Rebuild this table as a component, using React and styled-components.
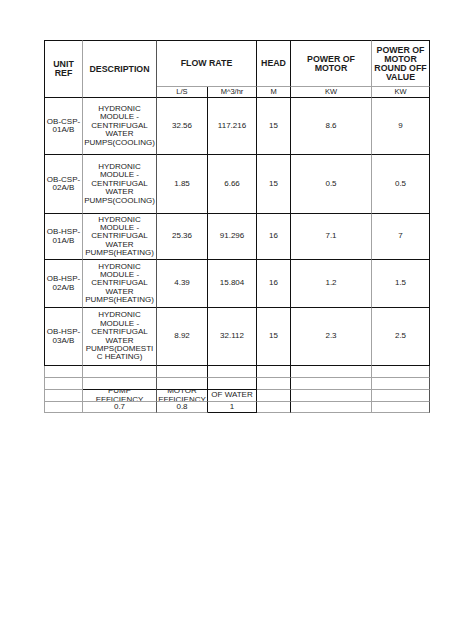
import React from 'react'
import styled, { createGlobalStyle } from 'styled-components'

const GlobalStyle = createGlobalStyle`
	body {
		margin: 0;
		background: #fff;
		font-family: "Liberation Sans", Arial, sans-serif;
	}
`

const LINE = { d: '#111', m: '#555', g: '#a3a3a3' }

const Sheet = styled.div`
	display: grid;
	grid-template-columns: 39px 74px 51px 49px 34px 81px 58px;
	grid-template-rows: 47px 11px 57px 59px 46px 48px 58px 12px 12px 12px 11px;
	width: 386px;
	margin: 40px 0 0 44px;
`

const Cell = styled.div`
	box-sizing: border-box;
	display: flex;
	align-items: center;
	justify-content: center;
	overflow: hidden;
	text-align: center;
	color: #1c1c1c;
	font-size: ${p => p.$size || (p.$bold ? 8.8 : 8)}px;
	line-height: ${p => (p.$bold ? '9px' : '8.35px')};
	font-weight: ${p => (p.$bold ? 700 : 400)};
	grid-column: span ${p => p.$cs || 1};
	grid-row: span ${p => p.$rs || 1};
	border-right: 1px solid ${p => LINE[p.$r || 'g']};
	border-bottom: 1px solid ${p => LINE[p.$b || 'g']};
	border-left: ${p => (p.$l ? `1px solid ${LINE[p.$l]}` : 'none')};
	border-top: ${p => (p.$t ? `1px solid ${LINE[p.$t]}` : 'none')};
`

const Lines = ({ lines }) => (
	<span>
		{[].concat(lines).map((l, i) => (
			<React.Fragment key={i}>
				{i > 0 && <br />}
				{l}
			</React.Fragment>
		))}
	</span>
)

const rows = [
	[['OB-CSP-', '01A/B'], ['HYDRONIC', 'MODULE -', 'CENTRIFUGAL', 'WATER', 'PUMPS(COOLING)'], '32.56', '117.216', '15', '8.6', '9'],
	[['OB-CSP-', '02A/B'], ['HYDRONIC', 'MODULE -', 'CENTRIFUGAL', 'WATER', 'PUMPS(COOLING)'], '1.85', '6.66', '15', '0.5', '0.5'],
	[['OB-HSP-', '01A/B'], ['HYDRONIC', 'MODULE -', 'CENTRIFUGAL', 'WATER', 'PUMPS(HEATING)'], '25.36', '91.296', '16', '7.1', '7'],
	[['OB-HSP-', '02A/B'], ['HYDRONIC', 'MODULE -', 'CENTRIFUGAL', 'WATER', 'PUMPS(HEATING)'], '4.39', '15.804', '16', '1.2', '1.5'],
	[['OB-HSP-', '03A/B'], ['HYDRONIC', 'MODULE -', 'CENTRIFUGAL', 'WATER', 'PUMPS(DOMESTI', 'C HEATING)'], '8.92', '32.112', '15', '2.3', '2.5'],
]

const dataRight = ['g', 'm', 'd', 'd', 'd', 'g', 'd']
const footRight = ['g', 'm', 'd', 'd', 'd', 'g', 'm']

const footer = [
	{ cells: ['', '', '', '', '', '', ''], bottom: ['g', 'g', 'g', 'g', 'g', 'g', 'g'] },
	{ cells: ['', '', '', '', '', '', ''], bottom: ['g', 'd', 'd', 'd', 'g', 'g', 'g'] },
	{
		cells: ['', ['PUMP', 'EFFICIENCY'], ['MOTOR', 'EFFICIENCY'], ['DENSITY', 'OF WATER', '(KG/L)'], '', '', ''],
		bottom: ['g', 'g', 'g', 'g', 'g', 'g', 'g'],
	},
	{ cells: ['', '0.7', '0.8', '1', '', '', ''], bottom: ['g', 'g', 'g', 'd', 'g', 'g', 'g'] },
]

const App = () => (
	<>
		<GlobalStyle />
		<Sheet>
			<Cell $rs={2} $l="d" $t="d" $r="g" $b="d" $bold>
				<Lines lines={['UNIT', 'REF']} />
			</Cell>
			<Cell $rs={2} $t="d" $r="m" $b="d" $bold>DESCRIPTION</Cell>
			<Cell $cs={2} $t="d" $r="d" $b="g" $bold>FLOW RATE</Cell>
			<Cell $t="d" $r="d" $b="g" $bold>HEAD</Cell>
			<Cell $t="d" $r="g" $b="g" $bold>
				<Lines lines={['POWER OF', 'MOTOR']} />
			</Cell>
			<Cell $t="d" $r="d" $b="g" $bold>
				<Lines lines={['POWER OF', 'MOTOR', 'ROUND OFF', 'VALUE']} />
			</Cell>

			<Cell $r="d" $b="d" $size={7.5}>L/S</Cell>
			<Cell $r="d" $b="d" $size={7.5}>M^3/hr</Cell>
			<Cell $r="d" $b="d" $size={7.5}>M</Cell>
			<Cell $r="g" $b="d" $size={7.5}>KW</Cell>
			<Cell $r="d" $b="d" $size={7.5}>KW</Cell>

			{rows.map((row, ri) =>
				row.map((val, ci) => (
					<Cell key={`r${ri}-${ci}`} $l={ci === 0 ? 'd' : undefined} $r={dataRight[ci]} $b="d">
						<Lines lines={val} />
					</Cell>
				))
			)}

			{footer.map((row, ri) =>
				row.cells.map((val, ci) => (
					<Cell
						key={`f${ri}-${ci}`}
						$l={ci === 0 ? 'g' : undefined}
						$r={ri >= 2 && ci === 3 ? 'd' : footRight[ci]}
						$b={row.bottom[ci]}
					>
						{val && <Lines lines={val} />}
					</Cell>
				))
			)}
		</Sheet>
	</>
)

export default App
